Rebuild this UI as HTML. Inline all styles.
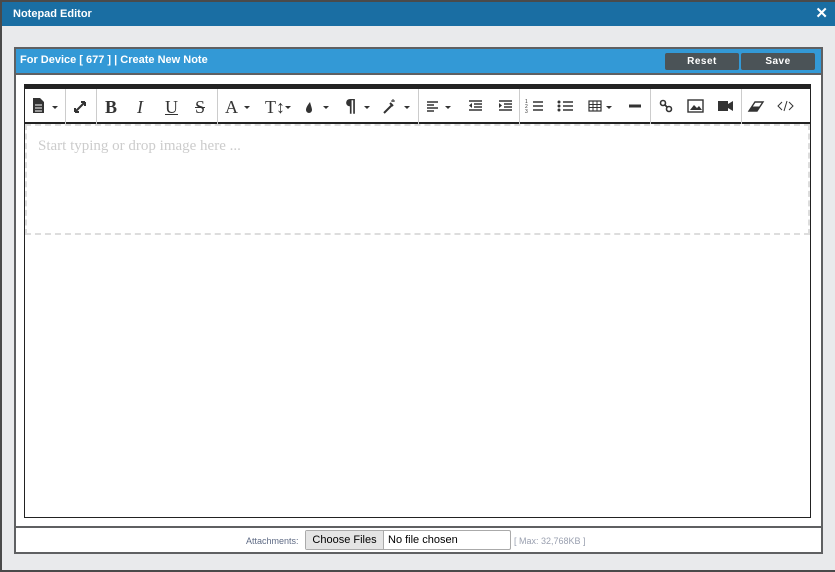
<!DOCTYPE html>
<html><head><meta charset="utf-8"><style>
*{margin:0;padding:0;box-sizing:border-box}
body{width:835px;height:572px;overflow:hidden;background:#4a4a4a;font-family:"Liberation Sans",sans-serif;position:relative}
.dlg{position:absolute;left:2px;top:2px;width:833px;height:568px;background:#e9eaec}
.title{position:absolute;left:0;top:0;width:833px;height:24px;background:#1a6ea3;color:#fff;font-weight:bold;font-size:11px;line-height:24px;padding-left:11px}
.x{position:absolute;right:7px;top:0;color:#fff;font-size:15px;font-weight:bold}
.panel{position:absolute;left:12px;top:45px;width:809px;height:507px;border:2px solid #5f6062;background:#fff}
.hdr{position:absolute;left:0;top:0;width:805px;height:26px;background:#3399d6;border-bottom:2px solid #5f6062;color:#fff;font-weight:bold;font-size:11px;line-height:22px;padding-left:4px}
.btn{position:absolute;top:4px;height:17px;width:74px;background:#4b5357;border-radius:2px;color:#fff;font-size:10px;font-weight:bold;text-align:center;line-height:17px;letter-spacing:.5px}
.ed{position:absolute;left:8px;top:35px;width:787px;height:434px;border:1px solid #222;border-top:5px solid #222}
.tb{position:absolute;left:0;top:0;width:785px;height:35px;border-bottom:2px solid #222}
.sep{position:absolute;top:0;width:1px;height:35px;background:#ccc}
.ic{position:absolute;top:9px;font-family:"Liberation Serif",serif;font-size:18px;color:#333;line-height:18px}
.car{position:absolute;top:17px;width:0;height:0;border-left:3px solid transparent;border-right:3px solid transparent;border-top:3px solid #333}
.ph{position:absolute;left:0;top:35px;width:785px;height:111px;border:2px dashed #ddd;color:#ccc;font-family:"Liberation Serif",serif;font-size:15px;padding:12px 11px}
.att{position:absolute;left:0;top:477px;width:805px;height:26px;border-top:2px solid #5f6062;font-size:9px;color:#5f6b85}
</style></head><body>
<div class="dlg">
<div class="title">Notepad Editor<span class="x">✕</span></div>
<div class="panel">
<div class="hdr">For Device [ 677 ] | Create New Note
<div class="btn" style="left:649px">Reset</div><div class="btn" style="left:725px">Save</div></div>
<div class="ed">
<div class="tb">
<div class="sep" style="left:40px"></div><div class="sep" style="left:71px"></div><div class="sep" style="left:192px"></div><div class="sep" style="left:393px"></div><div class="sep" style="left:494px"></div><div class="sep" style="left:625px"></div><div class="sep" style="left:716px"></div>
<svg style="position:absolute;left:0;top:1px" width="787" height="35" fill="#333" stroke="#333">
<path d="M8 8h7l4 4v11H8z" stroke="none"/><path d="M10 15h7M10 18h7M10 21h7" stroke="#fff" stroke-width="1"/>
<path d="M50 22l10-10M50 22v-4M50 22h4M60 12h-4M60 12v4" stroke-width="2" fill="none"/>
<path d="M285 12c-3 4-4 6-4 8a3 3 0 006 0c0-2-1-4-2-8z" stroke="none"/>
<path d="M359 23l8-8M365 13l3 3" stroke-width="2" fill="none"/><path d="M368 9v3M366 11h4" stroke-width="1"/>
<path d="M402 12h11M402 15h7M402 18h11M402 21h7" stroke-width="1.6"/>
<path d="M444 11h13M449 14h8M449 17h8M444 20h13" stroke-width="1.6"/><path d="M447 13l-3 2.5 3 2.5z" stroke="none"/>
<path d="M474 11h13M479 14h8M479 17h8M474 20h13" stroke-width="1.6"/><path d="M474 13l3 2.5-3 2.5z" stroke="none"/>
<path d="M508 12h10M508 16h10M508 20h10" stroke-width="1.6"/><text x="500" y="13" font-size="5" stroke="none">1</text><text x="500" y="18" font-size="5" stroke="none">2</text><text x="500" y="23" font-size="5" stroke="none">3</text>
<path d="M538 12h10M538 16h10M538 20h10" stroke-width="1.6"/><circle cx="534" cy="12" r="1.5" stroke="none"/><circle cx="534" cy="16" r="1.5" stroke="none"/><circle cx="534" cy="20" r="1.5" stroke="none"/>
<rect x="564" y="11" width="12" height="10" fill="none" stroke-width="1.2"/><path d="M564 14.5h12M564 17.5h12M568 11v10M572 11v10" stroke-width="1"/>
<path d="M604 16h12" stroke-width="3"/>
<circle cx="638" cy="13" r="2.5" fill="none" stroke-width="1.6"/><circle cx="644" cy="19" r="2.5" fill="none" stroke-width="1.6"/><path d="M640 15l2 2" stroke-width="1.6"/>
<rect x="663" y="10" width="15" height="12" fill="none" stroke-width="1.4"/><path d="M665 20l4-5 3 3 2-2 3 4z" stroke="none"/>
<path d="M693 11h10v10h-10z M703 14l5-3v10l-5-3z" stroke="none"/>
<path d="M724 21l6-9h8l-6 9z" fill="none" stroke-width="1.4"/><path d="M724 21l3-4.5h8l-3 4.5z" stroke="none"/>
<path d="M757 12l-4 4 4 4M764 12l4 4-4 4M762 11l-3 10" fill="none" stroke-width="1"/>
</svg>
<div class="car" style="left:27px"></div>
<span class="ic" style="left:80px;font-weight:bold">B</span>
<span class="ic" style="left:112px;font-style:italic">I</span>
<span class="ic" style="left:140px;text-decoration:underline">U</span>
<span class="ic" style="left:170px;text-decoration:line-through">S</span>
<span class="ic" style="left:200px">A</span><div class="car" style="left:219px"></div>
<span class="ic" style="left:240px">T↕</span><div class="car" style="left:260px"></div>
<div class="car" style="left:298px"></div>
<span class="ic" style="left:320px;font-weight:bold;font-family:'DejaVu Sans'">¶</span><div class="car" style="left:339px"></div>
<div class="car" style="left:379px"></div>
<div class="car" style="left:420px"></div>
<div class="car" style="left:581px"></div>
</div>
<div class="ph">Start typing or drop image here ...</div>
</div>
<div class="att">
<span style="position:absolute;left:230px;top:8px">Attachments:</span>
<div style="position:absolute;left:289px;top:2px;width:206px;height:20px;border:1px solid #aaa;border-radius:2px;background:#fff;font-size:11px;color:#000">
<div style="position:absolute;left:0;top:0;width:78px;height:18px;background:#e4e4e4;border-right:1px solid #aaa;text-align:center;line-height:18px">Choose Files</div>
<span style="position:absolute;left:82px;top:3px">No file chosen</span></div>
<span style="position:absolute;left:498px;top:8px;color:#9aa0b0">[ Max: 32,768KB ]</span>
</div>
</div>
</div>
</body></html>
